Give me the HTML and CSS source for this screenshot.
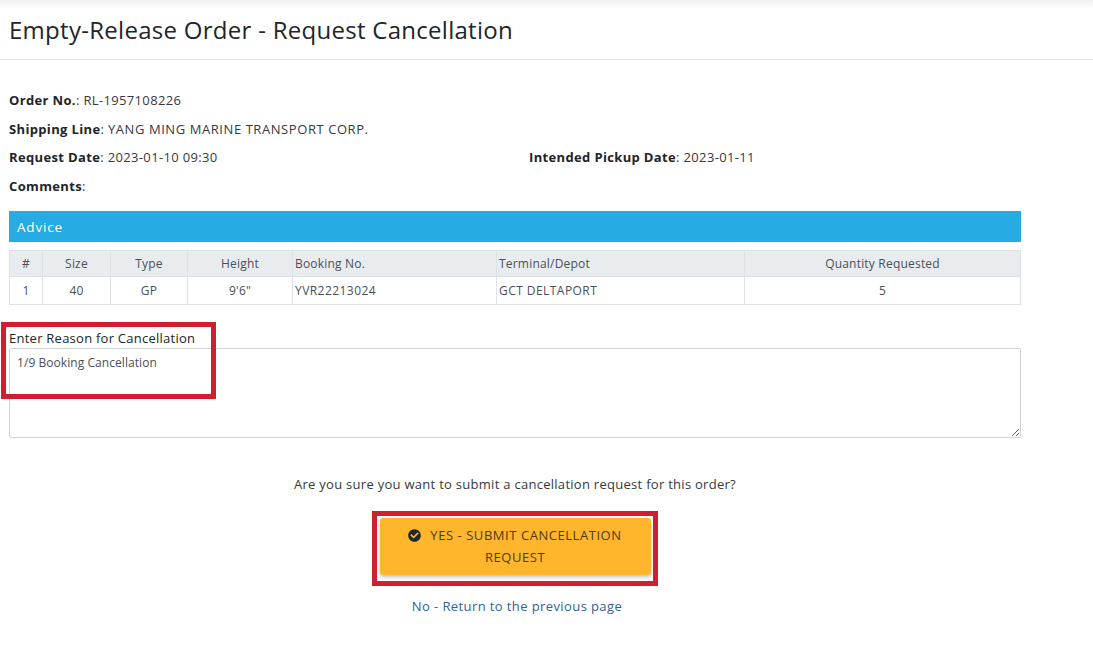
FILE: index.html
```html
<!DOCTYPE html>
<html lang="en">
<head>
<meta charset="utf-8">
<title>Empty-Release Order - Request Cancellation</title>
<link rel="stylesheet" href="styles.css">
</head>
<body>
<header class="page-head">
  <h1>Empty-Release Order - Request Cancellation</h1>
</header>
<main class="content">
  <div class="details">
    <p><b>Order No.</b>: RL-1957108226</p>
    <p><b>Shipping Line</b>: <span class="caps">YANG MING MARINE TRANSPORT CORP.</span></p>
    <div class="two-col">
      <p><b>Request Date</b>: 2023-01-10 09:30</p>
      <p><b>Intended Pickup Date</b>: 2023-01-11</p>
    </div>
    <p><b>Comments</b>:</p>
  </div>
  <div class="advice">Advice</div>
  <table class="grid">
    <colgroup>
      <col class="c1"><col class="c2"><col class="c3"><col class="c4"><col class="c5"><col class="c6"><col class="c7">
    </colgroup>
    <thead>
      <tr><th>#</th><th>Size</th><th>Type</th><th>Height</th><th class="left">Booking No.</th><th class="left">Terminal/Depot</th><th>Quantity Requested</th></tr>
    </thead>
    <tbody>
      <tr><td>1</td><td>40</td><td>GP</td><td>9'6"</td><td class="left">YVR22213024</td><td class="left">GCT DELTAPORT</td><td>5</td></tr>
    </tbody>
  </table>
  <label class="reason-label" for="reason">Enter Reason for Cancellation</label>
  <textarea class="reason" id="reason">1/9 Booking Cancellation</textarea>
  <div class="confirm">
    <p class="question">Are you sure you want to submit a cancellation request for this order?</p>
    <button class="submit" type="button">
      <svg class="check" viewBox="0 0 512 512" width="13" height="13"><path fill="#212529" d="M256 8C119 8 8 119 8 256s111 248 248 248 248-111 248-248S393 8 256 8zm-37 371L88 248l47-47 84 84 158-158 47 47-205 205z"/></svg>
      YES - SUBMIT CANCELLATION REQUEST
    </button>
    <a class="back" href="#">No - Return to the previous page</a>
  </div>
</main>
<div class="mark mark-reason"></div>
<div class="mark mark-submit"></div>
</body>
</html>
```
FILE: styles.css
```css
* { box-sizing: border-box; }
html, body { margin: 0; padding: 0; }
body {
  position: relative;
  height: 645px;
  overflow: hidden;
  background: #fff;
  color: #212529;
  font-family: "Open Sans", "Noto Sans", sans-serif;
  font-size: 12px;
  background-image: linear-gradient(#f1f1f1, #fff 9px);
}
.page-head {
  height: 60px;
  padding: 13px 9px 0;
  border-bottom: 1px solid #e4e6e8;
}
h1 {
  margin: 0;
  font-size: 24px;
  line-height: 33px;
  font-weight: 500;
  letter-spacing: 0.28px;
}
.content { width: 1021px; padding-left: 9px; }
.details { padding-top: 26px; font-size: 13px; letter-spacing: 0.35px; color: #343a40; }
.details p { margin: 0; height: 28.5px; line-height: 28.5px; }
.details b { color: #212529; font-weight: 700; }
.details .caps { letter-spacing: 0.57px; }
.two-col { display: flex; }
.two-col p { flex: none; width: 520px; }
.advice {
  height: 31px;
  margin-top: 11px;
  padding-left: 8px;
  background: #26abe3;
  color: #fff;
  font-size: 13.5px;
  font-weight: 500;
  line-height: 32px;
  letter-spacing: 0.8px;
}
.grid {
  width: 1011px;
  margin-top: 8px;
  border-collapse: collapse;
  table-layout: fixed;
  font-size: 12px;
  letter-spacing: 0.2px;
  color: #495057;
}
.c1 { width: 33px; } .c2 { width: 68px; } .c3 { width: 77px; } .c4 { width: 105px; }
.c5 { width: 204px; } .c6 { width: 248px; } .c7 { width: 276px; }
.grid th, .grid td {
  padding: 0 2px;
  border: 1px solid #dee2e6;
  text-align: center;
  font-weight: 400;
}
.grid th { height: 26px; background: #e9ecef; }
.grid td { height: 28px; }
.grid .left { text-align: left; }
.grid td.left { letter-spacing: 0.45px; }
.reason-label {
  display: block;
  margin-top: 24px;
  height: 19px;
  line-height: 18px;
  font-size: 13px;
  letter-spacing: 0.25px;
}
.reason {
  display: block;
  width: 1012px;
  height: 90px;
  padding: 5px 7px;
  border: 1px solid #ced4da;
  border-radius: 2px;
  color: #495057;
  font: 12px/18px "Open Sans", "Noto Sans", sans-serif;
  letter-spacing: 0.06px;
  background: #fff;
}
.confirm {
  display: flex;
  flex-direction: column;
  align-items: center;
}
.question {
  margin: 37px 0 0;
  line-height: 18px;
  font-size: 13px;
  letter-spacing: 0.28px;
  color: #343a40;
}
.submit {
  display: block;
  width: 271px;
  height: 57px;
  margin-top: 25px;
  padding: 5px 20px 7px;
  border: 0;
  border-radius: 3px;
  background: #ffb62c;
  color: #4a3a10;
  font: 13px/22px "Open Sans", "Noto Sans", sans-serif;
  letter-spacing: 0.55px;
  box-shadow: 0 2px 4px rgba(0,0,0,.25);
}
.check { vertical-align: -2px; margin-right: 5px; }
.back {
  margin-top: 22px;
  margin-left: 4px;
  color: #2f6296;
  font-size: 13px;
  letter-spacing: 0.4px;
  line-height: 18px;
  text-decoration: none;
}
.mark { position: absolute; border: 5px solid #d0202f; }
.mark-reason { left: 1px; top: 322px; width: 215px; height: 77px; }
.mark-submit { left: 372px; top: 511px; width: 286px; height: 75px; }
```
